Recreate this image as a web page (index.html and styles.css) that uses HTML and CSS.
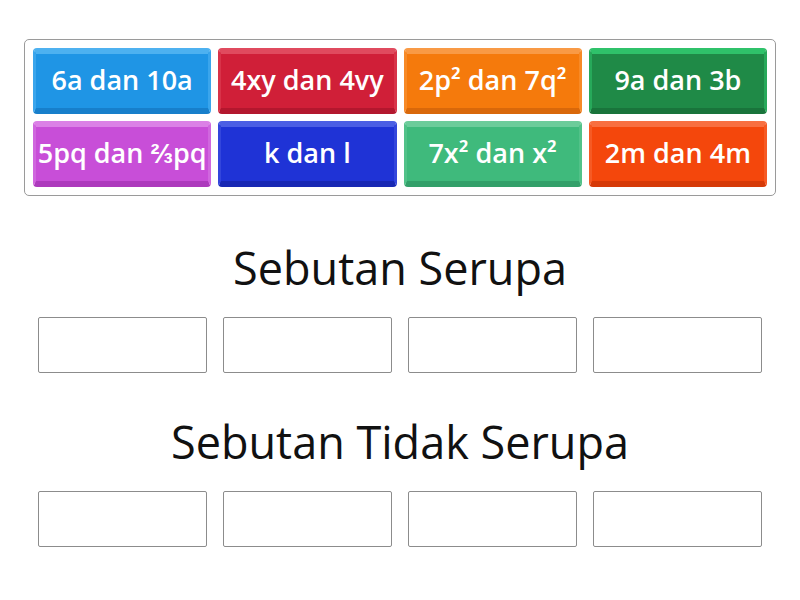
FILE: index.html
```html
<!DOCTYPE html>
<html>
<head>
<meta charset="utf-8">
<link rel="stylesheet" href="styles.css">
</head>
<body>
<div class="pool">
  <div class="tile blue">6a dan 10a</div>
  <div class="tile red">4xy dan 4vy</div>
  <div class="tile orange">2p² dan 7q²</div>
  <div class="tile green">9a dan 3b</div>
  <div class="tile magenta">5pq dan ⅔pq</div>
  <div class="tile indigo">k dan l</div>
  <div class="tile teal">7x² dan x²</div>
  <div class="tile vermilion">2m dan 4m</div>
</div>
<h2 class="group-title first">Sebutan Serupa</h2>
<div class="slots">
  <div class="slot"></div>
  <div class="slot"></div>
  <div class="slot"></div>
  <div class="slot"></div>
</div>
<h2 class="group-title second">Sebutan Tidak Serupa</h2>
<div class="slots">
  <div class="slot"></div>
  <div class="slot"></div>
  <div class="slot"></div>
  <div class="slot"></div>
</div>
</body>
</html>
```
FILE: styles.css
```css
html, body {
  margin: 0;
  padding: 0;
  background: #ffffff;
  font-family: "Open Sans", "Liberation Sans", sans-serif;
}

.pool {
  margin: 39px 0 0 24px;
  width: 734px;
  padding: 8px;
  border: 1px solid #9a9a9a;
  border-radius: 5px;
  display: grid;
  grid-template-columns: repeat(4, 1fr);
  gap: 7px;
}

.tile {
  height: 66px;
  box-sizing: border-box;
  border-radius: 4px;
  border-style: solid;
  border-width: 6px 3px 6px 3px;
  padding-bottom: 4px;
  color: #ffffff;
  font-weight: 600;
  font-size: 27px;
  display: flex;
  align-items: center;
  justify-content: center;
  white-space: nowrap;
}

.blue { background: #1f95e5; border-color: #4db1f0 #3aa5ec #177fcb #3aa5ec; }
.red { background: #d01f38; border-color: #e04a5e #d83349 #b3172e #d83349; }
.orange { background: #f57a0c; border-color: #f99a45 #f78a27 #d9680a #f78a27; }
.green { background: #1f8a47; border-color: #2fc26a #27a95a #19743b #27a95a; }
.magenta { background: #c84ed8; border-color: #db80e6 #d067de #ad3abd #d067de; }
.indigo { background: #1f33d6; border-color: #4b5ee4 #3346dc #1828b4 #3346dc; }
.teal { background: #3fba7c; border-color: #6ccc9a #52c289 #33a06a #52c289; }
.vermilion { background: #f4470c; border-color: #f86f40 #f65a24 #d63a08 #f65a24; }

.group-title {
  margin: 0;
  text-align: center;
  font-weight: 400;
  font-size: 45px;
  line-height: 61px;
  color: #111111;
}

.group-title.first { margin-top: 41px; }
.group-title.second { margin-top: 38px; }

.slots {
  margin-top: 19px;
  display: flex;
  justify-content: center;
  gap: 16px;
}

.slot {
  width: 167px;
  height: 54px;
  border: 1px solid #8c8c8c;
  border-radius: 2px;
  background: #ffffff;
}
```
